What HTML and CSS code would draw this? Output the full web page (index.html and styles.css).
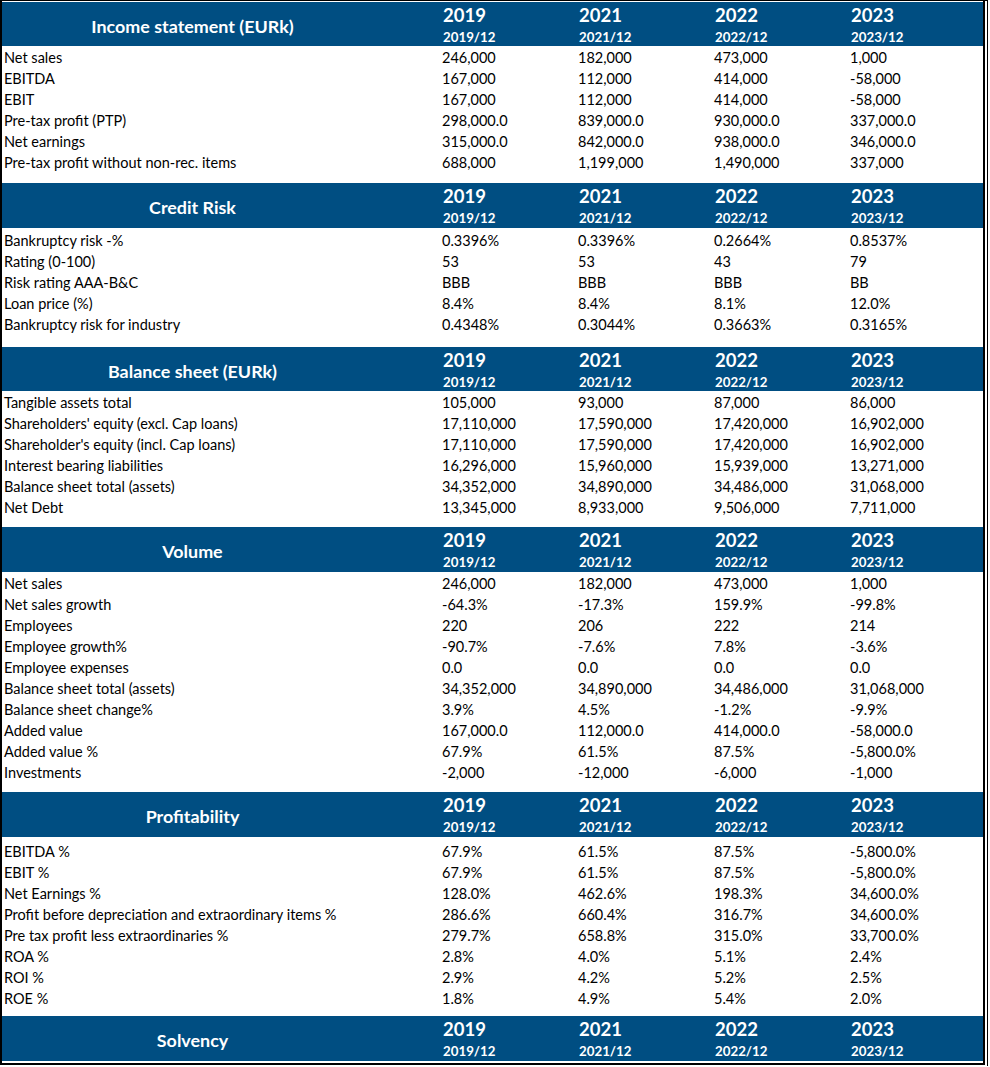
FILE: index.html
```html
<!DOCTYPE html>
<html>
<head>
<meta charset="utf-8">
<link rel="stylesheet" href="styles.css">
</head>
<body>
<div class="frame">
<div class="sheet">

<section class="block">
  <div class="head">
    <div class="title">Income statement (EURk)</div>
    <div class="gapcell"></div>
    <div class="yr"><span class="y">2019</span><span class="p">2019/12</span></div>
    <div class="yr"><span class="y">2021</span><span class="p">2021/12</span></div>
    <div class="yr"><span class="y">2022</span><span class="p">2022/12</span></div>
    <div class="yr"><span class="y">2023</span><span class="p">2023/12</span></div>
  </div>
  <div class="rows sp-11">
    <div class="row"><span>Net sales</span><span>246,000</span><span>182,000</span><span>473,000</span><span>1,000</span></div>
    <div class="row"><span>EBITDA</span><span>167,000</span><span>112,000</span><span>414,000</span><span>-58,000</span></div>
    <div class="row"><span>EBIT</span><span>167,000</span><span>112,000</span><span>414,000</span><span>-58,000</span></div>
    <div class="row"><span>Pre-tax profit (PTP)</span><span>298,000.0</span><span>839,000.0</span><span>930,000.0</span><span>337,000.0</span></div>
    <div class="row"><span>Net earnings</span><span>315,000.0</span><span>842,000.0</span><span>938,000.0</span><span>346,000.0</span></div>
    <div class="row"><span>Pre-tax profit without non-rec. items</span><span>688,000</span><span>1,199,000</span><span>1,490,000</span><span>337,000</span></div>
  </div>
</section>

<section class="block">
  <div class="head h45">
    <div class="title">Credit Risk</div>
    <div class="gapcell"></div>
    <div class="yr"><span class="y">2019</span><span class="p">2019/12</span></div>
    <div class="yr"><span class="y">2021</span><span class="p">2021/12</span></div>
    <div class="yr"><span class="y">2022</span><span class="p">2022/12</span></div>
    <div class="yr"><span class="y">2023</span><span class="p">2023/12</span></div>
  </div>
  <div class="rows pt-1 sp-13">
    <div class="row"><span>Bankruptcy risk -%</span><span>0.3396%</span><span>0.3396%</span><span>0.2664%</span><span>0.8537%</span></div>
    <div class="row"><span>Rating (0-100)</span><span>53</span><span>53</span><span>43</span><span>79</span></div>
    <div class="row"><span>Risk rating AAA-B&amp;C</span><span>BBB</span><span>BBB</span><span>BBB</span><span>BB</span></div>
    <div class="row"><span>Loan price (%)</span><span>8.4%</span><span>8.4%</span><span>8.1%</span><span>12.0%</span></div>
    <div class="row"><span>Bankruptcy risk for industry</span><span>0.4348%</span><span>0.3044%</span><span>0.3663%</span><span>0.3165%</span></div>
  </div>
</section>

<section class="block">
  <div class="head">
    <div class="title">Balance sheet (EURk)</div>
    <div class="gapcell"></div>
    <div class="yr"><span class="y">2019</span><span class="p">2019/12</span></div>
    <div class="yr"><span class="y">2021</span><span class="p">2021/12</span></div>
    <div class="yr"><span class="y">2022</span><span class="p">2022/12</span></div>
    <div class="yr"><span class="y">2023</span><span class="p">2023/12</span></div>
  </div>
  <div class="rows sp-10">
    <div class="row"><span>Tangible assets total</span><span>105,000</span><span>93,000</span><span>87,000</span><span>86,000</span></div>
    <div class="row"><span>Shareholders' equity (excl. Cap loans)</span><span>17,110,000</span><span>17,590,000</span><span>17,420,000</span><span>16,902,000</span></div>
    <div class="row"><span>Shareholder's equity (incl. Cap loans)</span><span>17,110,000</span><span>17,590,000</span><span>17,420,000</span><span>16,902,000</span></div>
    <div class="row"><span>Interest bearing liabilities</span><span>16,296,000</span><span>15,960,000</span><span>15,939,000</span><span>13,271,000</span></div>
    <div class="row"><span>Balance sheet total (assets)</span><span>34,352,000</span><span>34,890,000</span><span>34,486,000</span><span>31,068,000</span></div>
    <div class="row"><span>Net Debt</span><span>13,345,000</span><span>8,933,000</span><span>9,506,000</span><span>7,711,000</span></div>
  </div>
</section>

<section class="block">
  <div class="head h45">
    <div class="title">Volume</div>
    <div class="gapcell"></div>
    <div class="yr"><span class="y">2019</span><span class="p">2019/12</span></div>
    <div class="yr"><span class="y">2021</span><span class="p">2021/12</span></div>
    <div class="yr"><span class="y">2022</span><span class="p">2022/12</span></div>
    <div class="yr"><span class="y">2023</span><span class="p">2023/12</span></div>
  </div>
  <div class="rows sp-10">
    <div class="row"><span>Net sales</span><span>246,000</span><span>182,000</span><span>473,000</span><span>1,000</span></div>
    <div class="row"><span>Net sales growth</span><span>-64.3%</span><span>-17.3%</span><span>159.9%</span><span>-99.8%</span></div>
    <div class="row"><span>Employees</span><span>220</span><span>206</span><span>222</span><span>214</span></div>
    <div class="row"><span>Employee growth%</span><span>-90.7%</span><span>-7.6%</span><span>7.8%</span><span>-3.6%</span></div>
    <div class="row"><span>Employee expenses</span><span>0.0</span><span>0.0</span><span>0.0</span><span>0.0</span></div>
    <div class="row"><span>Balance sheet total (assets)</span><span>34,352,000</span><span>34,890,000</span><span>34,486,000</span><span>31,068,000</span></div>
    <div class="row"><span>Balance sheet change%</span><span>3.9%</span><span>4.5%</span><span>-1.2%</span><span>-9.9%</span></div>
    <div class="row"><span>Added value</span><span>167,000.0</span><span>112,000.0</span><span>414,000.0</span><span>-58,000.0</span></div>
    <div class="row"><span>Added value %</span><span>67.9%</span><span>61.5%</span><span>87.5%</span><span>-5,800.0%</span></div>
    <div class="row"><span>Investments</span><span>-2,000</span><span>-12,000</span><span>-6,000</span><span>-1,000</span></div>
  </div>
</section>

<section class="block">
  <div class="head h45">
    <div class="title">Profitability</div>
    <div class="gapcell"></div>
    <div class="yr"><span class="y">2019</span><span class="p">2019/12</span></div>
    <div class="yr"><span class="y">2021</span><span class="p">2021/12</span></div>
    <div class="yr"><span class="y">2022</span><span class="p">2022/12</span></div>
    <div class="yr"><span class="y">2023</span><span class="p">2023/12</span></div>
  </div>
  <div class="rows pt-3 sp-8">
    <div class="row"><span>EBITDA %</span><span>67.9%</span><span>61.5%</span><span>87.5%</span><span>-5,800.0%</span></div>
    <div class="row"><span>EBIT %</span><span>67.9%</span><span>61.5%</span><span>87.5%</span><span>-5,800.0%</span></div>
    <div class="row"><span>Net Earnings %</span><span>128.0%</span><span>462.6%</span><span>198.3%</span><span>34,600.0%</span></div>
    <div class="row"><span>Profit before depreciation and extraordinary items %</span><span>286.6%</span><span>660.4%</span><span>316.7%</span><span>34,600.0%</span></div>
    <div class="row"><span>Pre tax profit less extraordinaries %</span><span>279.7%</span><span>658.8%</span><span>315.0%</span><span>33,700.0%</span></div>
    <div class="row"><span>ROA %</span><span>2.8%</span><span>4.0%</span><span>5.1%</span><span>2.4%</span></div>
    <div class="row"><span>ROI %</span><span>2.9%</span><span>4.2%</span><span>5.2%</span><span>2.5%</span></div>
    <div class="row"><span>ROE %</span><span>1.8%</span><span>4.9%</span><span>5.4%</span><span>2.0%</span></div>
  </div>
</section>

<section class="block">
  <div class="head h45">
    <div class="title">Solvency</div>
    <div class="gapcell"></div>
    <div class="yr"><span class="y">2019</span><span class="p">2019/12</span></div>
    <div class="yr"><span class="y">2021</span><span class="p">2021/12</span></div>
    <div class="yr"><span class="y">2022</span><span class="p">2022/12</span></div>
    <div class="yr"><span class="y">2023</span><span class="p">2023/12</span></div>
  </div>
</section>

</div>
</div>
</body>
</html>
```

FILE: styles.css
```css
html, body {
  margin: 0;
  padding: 0;
  background: #ffffff;
}

body {
  font-family: Lato, "Liberation Sans", sans-serif;
  color: #000000;
}

.frame {
  width: 988px;
  height: 1066px;
  border-top: 1px solid #000;
  border-right: 1px solid #000;
  box-sizing: border-box;
}

.sheet {
  width: 985px;
  box-sizing: border-box;
  border-left: 2px solid #000;
  border-right: 2px solid #000;
  border-bottom: 2px solid #000;
  padding-top: 1px;
  padding-bottom: 2px;
}

.head {
  display: flex;
  height: 44px;
  background: #004e82;
  color: #ffffff;
  font-weight: 700;
}

.head > div {
  flex-shrink: 0;
  box-sizing: border-box;
}

.head.h45 {
  height: 45px;
}

.title {
  width: 380px;
  display: flex;
  align-items: center;
  justify-content: center;
  font-size: 17.9px;
  padding-top: 3px;
  padding-left: 1px;
}

.gapcell {
  width: 56px;
}

.yr {
  width: 136px;
  display: flex;
  flex-direction: column;
  padding-left: 5px;
  padding-top: 3px;
}

.yr .y {
  font-size: 18.5px;
  line-height: 20px;
}

.yr .p {
  font-size: 13.3px;
  line-height: 17px;
  margin-top: 4px;
}

.rows {
  display: flex;
  flex-direction: column;
}

.pt-1 { padding-top: 1px; }
.pt-3 { padding-top: 3px; }

.sp-8 { padding-bottom: 8px; }
.sp-10 { padding-bottom: 10px; }
.sp-11 { padding-bottom: 11px; }
.sp-13 { padding-bottom: 13px; }

.row {
  display: grid;
  grid-template-columns: 436px 136px 136px 136px 136px;
  height: 21px;
  box-sizing: border-box;
  padding-top: 1px;
  line-height: 21px;
  font-size: 14.5px;
}

.row span {
  white-space: nowrap;
  padding-left: 4px;
}

.row span:first-child {
  padding-left: 2px;
}
```
